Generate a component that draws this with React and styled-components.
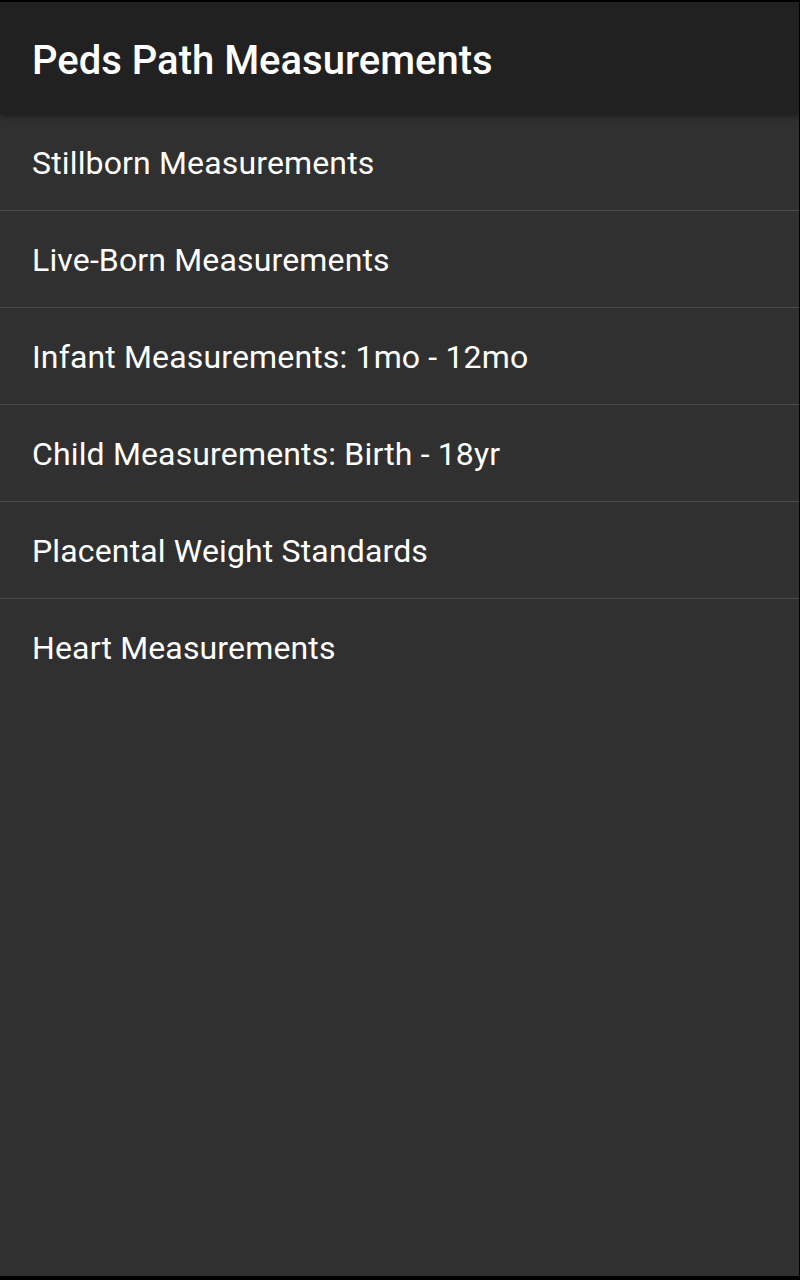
import React from 'react'
import styled, { createGlobalStyle } from 'styled-components'

const GlobalStyle = createGlobalStyle`
  html, body {
    margin: 0;
    padding: 0;
    background: #000;
  }
  body {
    font-family: Roboto, "Noto Sans", sans-serif;
  }
`

const Frame = styled.div`
  width: 799px;
  height: 1274px;
  margin-top: 2px;
  background: #303030;
  display: flex;
  flex-direction: column;
  overflow: hidden;
`

const Toolbar = styled.header`
  height: 112px;
  flex-shrink: 0;
  background: #212121;
  display: flex;
  align-items: center;
  padding-left: 32px;
  box-shadow: 0 2px 6px rgba(0, 0, 0, 0.45);
  position: relative;
  z-index: 1;
`

const Title = styled.h1`
  margin: 0;
  color: #fff;
  font-size: 40px;
  font-weight: 500;
  padding-top: 4px;
`

const List = styled.ul`
  list-style: none;
  margin: 0;
  padding: 0;
`

const Row = styled.li`
  height: 97px;
  box-sizing: border-box;
  display: flex;
  align-items: center;
  padding: 2px 0 0 32px;
  color: #fff;
  font-size: 32px;
  letter-spacing: 0.15px;
  border-bottom: 1px solid ${p => (p.$last ? 'transparent' : '#4a4a4a')};
`

const items = [
  'Stillborn Measurements',
  'Live-Born Measurements',
  'Infant Measurements: 1mo - 12mo',
  'Child Measurements: Birth - 18yr',
  'Placental Weight Standards',
  'Heart Measurements'
]

const App = () => (
  <>
    <GlobalStyle />
    <Frame>
      <Toolbar>
        <Title>Peds Path Measurements</Title>
      </Toolbar>
      <List>
        {items.map((item, i) => (
          <Row key={item} $last={i === items.length - 1}>
            {item}
          </Row>
        ))}
      </List>
    </Frame>
  </>
)

export default App
